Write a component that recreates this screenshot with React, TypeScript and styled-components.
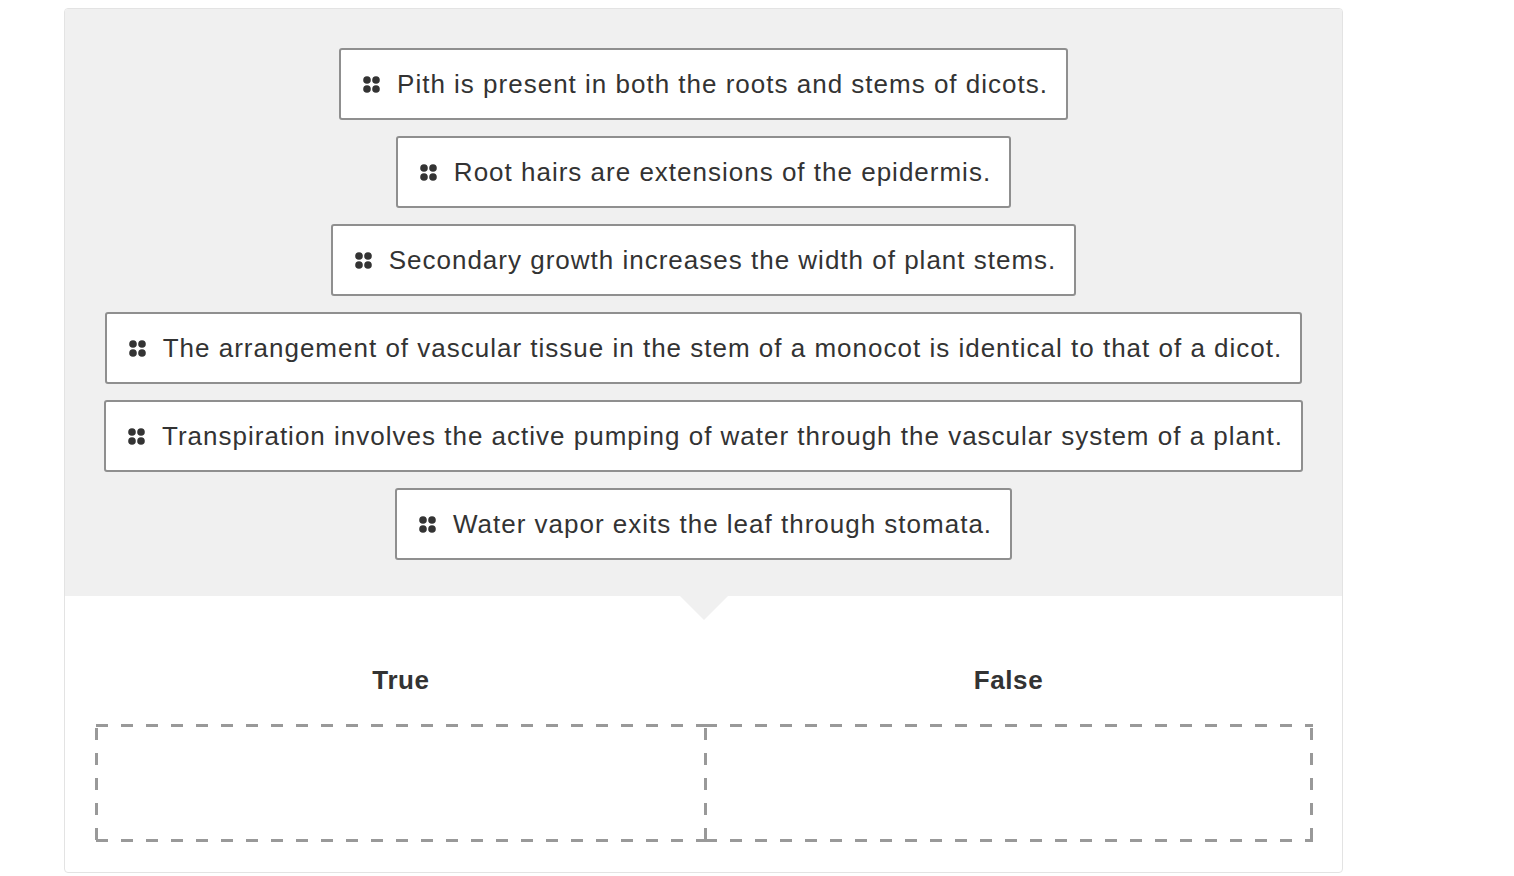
import React from 'react';
import styled, { createGlobalStyle } from 'styled-components';

const GlobalStyle = createGlobalStyle`
  body {
    margin: 0;
    background: #fff;
    font-family: "Liberation Sans", Arial, sans-serif;
    color: #333;
  }
`;

const Page = styled.div`
  padding: 8px 0 0 64px;
`;

const Card = styled.div`
  width: 1277px;
  border: 1px solid #e3e3e3;
  border-radius: 4px;
  overflow: hidden;
  background: #fff;
`;

const Bank = styled.div`
  position: relative;
  background: #f0f0f0;
  padding: 39px 38px 36px;
  display: flex;
  flex-direction: column;
  align-items: center;
  gap: 16px;
`;

// little arrow hanging under the choices bank
const Pointer = styled.div`
  position: absolute;
  left: 50%;
  bottom: -24px;
  margin-left: -24px;
  width: 0;
  height: 0;
  border-left: 24px solid transparent;
  border-right: 24px solid transparent;
  border-top: 24px solid #f0f0f0;
`;

const Choice = styled.div`
  display: flex;
  align-items: center;
  gap: 17px;
  height: 68px;
  padding: 0 18px 0 22px;
  background: #fff;
  border: 2px solid #8f8f8f;
  border-radius: 3px;
  font-size: 26px;
  letter-spacing: 1px;
  color: #333;
  white-space: nowrap;
  cursor: grab;
`;

const Handle = () => (
  <svg width="17" height="17" viewBox="0 0 17 17">
    <circle cx="4" cy="4" r="3.8" fill="#333" />
    <circle cx="13" cy="4" r="3.8" fill="#333" />
    <circle cx="4" cy="13" r="3.8" fill="#333" />
    <circle cx="13" cy="13" r="3.8" fill="#333" />
  </svg>
);

const Targets = styled.div`
  padding: 69px 29px 30px 30px;
  display: grid;
  grid-template-columns: 1fr 1fr;
`;

const Column = styled.div<{ $left?: boolean }>`
  display: flex;
  flex-direction: column;
  margin-right: ${(p) => (p.$left ? '-3px' : '0')};
`;

const Heading = styled.h3`
  margin: 0 0 29px;
  text-align: center;
  font-size: 26px;
  font-weight: bold;
  letter-spacing: 0.6px;
  color: #333;
  line-height: 30px;
`;

// long dashes, drawn with gradients since a css dashed border is too fine
const Zone = styled.div`
  height: 118px;
  box-sizing: border-box;
  background:
    linear-gradient(to right, #999 50%, transparent 50%) 1px 0 / 25px 3px repeat-x,
    linear-gradient(to right, #999 50%, transparent 50%) 1px 100% / 25px 3px repeat-x,
    linear-gradient(to bottom, #999 50%, transparent 50%) 0 4px / 3px 25px repeat-y,
    linear-gradient(to bottom, #999 50%, transparent 50%) 100% 4px / 3px 25px repeat-y;
`;

const choices = [
  'Pith is present in both the roots and stems of dicots.',
  'Root hairs are extensions of the epidermis.',
  'Secondary growth increases the width of plant stems.',
  'The arrangement of vascular tissue in the stem of a monocot is identical to that of a dicot.',
  'Transpiration involves the active pumping of water through the vascular system of a plant.',
  'Water vapor exits the leaf through stomata.',
];

export default function App() {
  return (
    <>
      <GlobalStyle />
      <Page>
        <Card>
          <Bank>
            {choices.map((c) => (
              <Choice key={c}>
                <Handle />
                <span>{c}</span>
              </Choice>
            ))}
            <Pointer />
          </Bank>
          <Targets>
            <Column $left>
              <Heading>True</Heading>
              <Zone />
            </Column>
            <Column>
              <Heading>False</Heading>
              <Zone />
            </Column>
          </Targets>
        </Card>
      </Page>
    </>
  );
}
